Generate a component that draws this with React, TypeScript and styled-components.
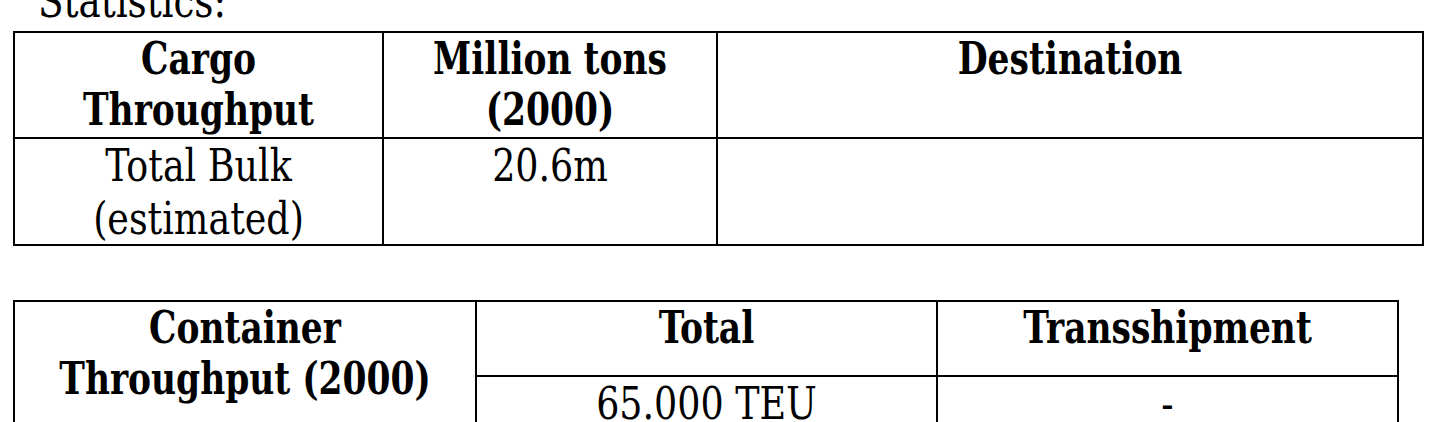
import React from 'react';
import styled, { createGlobalStyle } from 'styled-components';

const GlobalStyle = createGlobalStyle`
  body {
    margin: 0;
    background: #fff;
    color: #000;
    font-family: "DejaVu Serif Condensed", "DejaVu Serif", serif;
  }
`;

export const Page = styled.div`
  padding-left: 13px;
  overflow: hidden;
`;

export const Caption = styled.p`
  margin: -25px 0 3px 25px;
  font-size: 46px;
  line-height: 53px;
  transform: scaleX(0.9);
  transform-origin: left center;
`;

export const Grid = styled.div<{ $cols: string; $rows: string; $mb?: number }>`
  display: grid;
  grid-template-columns: ${(p) => p.$cols};
  grid-template-rows: ${(p) => p.$rows};
  gap: 2px;
  padding: 2px;
  background: #000;
  width: max-content;
  margin-bottom: ${(p) => p.$mb ?? 0}px;
`;

export const Cell = styled.div<{ $span?: number }>`
  background: #fff;
  text-align: center;
  grid-row: ${(p) => (p.$span ? `span ${p.$span}` : 'auto')};
  overflow: hidden;
`;

export const Label = styled.span<{ $bold?: boolean }>`
  display: inline-block;
  width: 100%;
  font-size: ${(p) => (p.$bold ? 44 : 45)}px;
  font-weight: ${(p) => (p.$bold ? 700 : 400)};
  line-height: normal;
  transform: scaleX(${(p) => (p.$bold ? 0.87 : 0.9)});
`;

export default function App() {
  return (
    <Page>
      <GlobalStyle />
      <Caption>Statistics:</Caption>

      <Grid $cols="367px 332px 704px" $rows="104px 105px" $mb={54}>
        <Cell>
          <Label $bold>Cargo Throughput</Label>
        </Cell>
        <Cell>
          <Label $bold>Million tons (2000)</Label>
        </Cell>
        <Cell>
          <Label $bold>Destination</Label>
        </Cell>
        <Cell>
          <Label>Total Bulk (estimated)</Label>
        </Cell>
        <Cell>
          <Label>20.6m</Label>
        </Cell>
        <Cell />
      </Grid>

      <Grid $cols="460px 459px 459px" $rows="73px 60px">
        <Cell $span={2}>
          <Label $bold>Container Throughput (2000)</Label>
        </Cell>
        <Cell>
          <Label $bold>Total</Label>
        </Cell>
        <Cell>
          <Label $bold>Transshipment</Label>
        </Cell>
        <Cell>
          <Label>65.000 TEU</Label>
        </Cell>
        <Cell>
          <Label>-</Label>
        </Cell>
      </Grid>
    </Page>
  );
}
